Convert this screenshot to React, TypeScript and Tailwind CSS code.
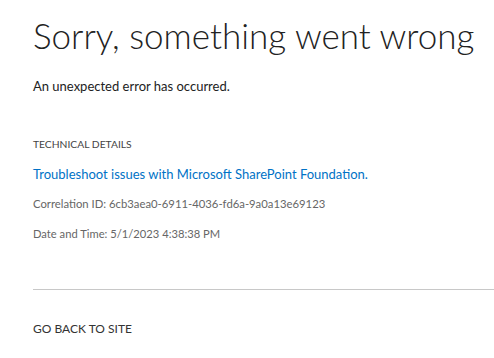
export default function App() {
  return (
    <div className="min-h-[358px] overflow-hidden bg-white pl-[33px] font-['Lato',sans-serif] text-[#333]">
      <h1 className="whitespace-nowrap pt-[13px] text-[35px] font-light leading-[44px] text-[#222]">
        Sorry, something went wrong
      </h1>
      <p className="mt-[20px] whitespace-nowrap text-[13px] leading-[18px] text-[#222]">
        An unexpected error has occurred.
      </p>
      <div className="mt-[42px]">
        <p className="whitespace-nowrap text-[10.3px] uppercase leading-[14px] text-[#444]">Technical Details</p>
        <a href="#" className="mt-[14px] block whitespace-nowrap text-[13px] leading-[18px] text-[#0072c6]">
          Troubleshoot issues with Microsoft SharePoint Foundation.
        </a>
        <p className="mt-[12px] whitespace-nowrap text-[11.3px] leading-[18px] text-[#666]">
          Correlation ID: 6cb3aea0-6911-4036-fd6a-9a0a13e69123
        </p>
        <p className="mt-[12px] whitespace-nowrap text-[11.2px] leading-[18px] text-[#666]">
          Date and Time: 5/1/2023 4:38:38 PM
        </p>
      </div>
      <div className="mt-[46px] border-t border-[#c8c8c8]" />
      <a href="#" className="mt-[30px] block whitespace-nowrap text-[12px] uppercase leading-[18px] text-[#333]">
        Go back to site
      </a>
    </div>
  );
}
